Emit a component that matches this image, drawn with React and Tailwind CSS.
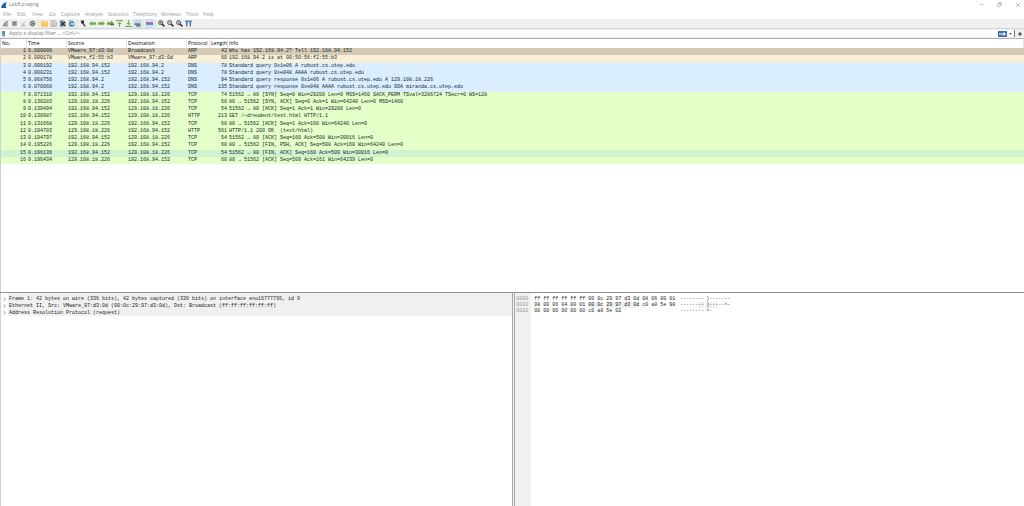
import React from "react";
import { Copy, Minus, X } from "lucide-react";

const MENU = [
  { label: "File", width: "w-[14px]" },
  { label: "Edit", width: "w-[15px]" },
  { label: "View", width: "w-[17px]" },
  { label: "Go", width: "w-[12px]" },
  { label: "Capture", width: "w-[24px]" },
  { label: "Analyze", width: "w-[23px]" },
  { label: "Statistics", width: "w-[25px]" },
  { label: "Telephony", width: "w-[28px]" },
  { label: "Wireless", width: "w-[25px]" },
  { label: "Tools", width: "w-[17px]" },
  { label: "Help", width: "w-[16px]" },
];

const PACKETS = [
  ["0.000000", "VMware_97:d3:0d", "Broadcast", "ARP", 42, "Who has 192.168.94.2? Tell 192.168.94.152", "bg-[#d4cab5]"],
  ["0.000178", "VMware_f2:55:b3", "VMware_97:d3:0d", "ARP", 60, "192.168.94.2 is at 00:50:56:f2:55:b3", "bg-[#faf0d7]"],
  ["0.000192", "192.168.94.152", "192.168.94.2", "DNS", 78, "Standard query 0x1e06 A robust.cs.utep.edu", "bg-[#daeeff]"],
  ["0.000231", "192.168.94.152", "192.168.94.2", "DNS", 78, "Standard query 0xe048 AAAA robust.cs.utep.edu", "bg-[#daeeff]"],
  ["0.068756", "192.168.94.2", "192.168.94.152", "DNS", 94, "Standard query response 0x1e06 A robust.cs.utep.edu A 129.108.18.226", "bg-[#daeeff]"],
  ["0.070960", "192.168.94.2", "192.168.94.152", "DNS", 135, "Standard query response 0xe048 AAAA robust.cs.utep.edu SOA miranda.cs.utep.edu", "bg-[#daeeff]"],
  ["0.071310", "192.168.94.152", "129.108.18.226", "TCP", 74, "51562 → 80 [SYN] Seq=0 Win=29200 Len=0 MSS=1460 SACK_PERM TSval=3286724 TSecr=0 WS=128", "bg-[#e4ffc7]"],
  ["0.130283", "129.108.18.226", "192.168.94.152", "TCP", 60, "80 → 51562 [SYN, ACK] Seq=0 Ack=1 Win=64240 Len=0 MSS=1460", "bg-[#e4ffc7]"],
  ["0.130494", "192.168.94.152", "129.108.18.226", "TCP", 54, "51562 → 80 [ACK] Seq=1 Ack=1 Win=29200 Len=0", "bg-[#e4ffc7]"],
  ["0.130987", "192.168.94.152", "129.108.18.226", "HTTP", 213, "GET /~dreudent/test.html HTTP/1.1", "bg-[#e4ffc7]"],
  ["0.131668", "129.108.18.226", "192.168.94.152", "TCP", 60, "80 → 51562 [ACK] Seq=1 Ack=160 Win=64240 Len=0", "bg-[#e4ffc7]"],
  ["0.194703", "129.108.18.226", "192.168.94.152", "HTTP", 561, "HTTP/1.1 200 OK  (text/html)", "bg-[#e4ffc7]"],
  ["0.194797", "192.168.94.152", "129.108.18.226", "TCP", 54, "51562 → 80 [ACK] Seq=160 Ack=508 Win=30016 Len=0", "bg-[#e4ffc7]"],
  ["0.195226", "129.108.18.226", "192.168.94.152", "TCP", 60, "80 → 51562 [FIN, PSH, ACK] Seq=508 Ack=160 Win=64240 Len=0", "bg-[#e4ffc7]"],
  ["0.196136", "192.168.94.152", "129.108.18.226", "TCP", 54, "51562 → 80 [FIN, ACK] Seq=160 Ack=509 Win=30016 Len=0", "bg-[#cff3cf]"],
  ["0.196434", "129.108.18.226", "192.168.94.152", "TCP", 60, "80 → 51562 [ACK] Seq=509 Ack=161 Win=64239 Len=0", "bg-[#e4ffc7]"],
];

const DETAILS = [
  "Frame 1: 42 bytes on wire (336 bits), 42 bytes captured (336 bits) on interface eno16777736, id 0",
  "Ethernet II, Src: VMware_97:d3:0d (00:0c:29:97:d3:0d), Dst: Broadcast (ff:ff:ff:ff:ff:ff)",
  "Address Resolution Protocol (request)",
];

// array values are split into plain and highlighted runs
const BYTES = [
  { offset: "0000", left: "ff ff ff ff ff ff 00 0c", right: "29 97 d3 0d 08 06 00 01", a: "········", b: ")·······" },
  { offset: "0010", left: ["08 00 06 04 00 01 ", "00 0c"], right: ["29 97 d3 0d", " c0 a8 5e 98"], a: ["······", "··"], b: [")···", "··^·"] },
  { offset: "0020", left: "00 00 00 00 00 00 c0 a8", right: "5e 02", a: "········", b: "^·" },
];

function Fin({ className, fill }) {
  return (
    <svg viewBox="0 0 12 12" className={className} aria-hidden="true">
      <path d="M0 12C1 6 5 1 12 0C9 4 9 8 11 12Z" fill={fill} />
    </svg>
  );
}

function Eraser() {
  return (
    <>
      <path d="M2 11C3 6 5 3 10 2C8 5 8 8 9 11Z" fill="#b9b9b9" />
      <path d="M4 9L8 5M8 5V8M8 5H5" stroke="#fff" fill="none" />
    </>
  );
}

function Gear() {
  return (
    <>
      <circle cx="6" cy="6" r="5.5" fill="#c9c9c9" />
      <circle cx="6" cy="6" r="3.5" stroke="#444" strokeWidth="1.5" fill="#eee" />
      <circle cx="6" cy="6" r="1.5" fill="#333" />
    </>
  );
}

function Page({ tint, children }) {
  return (
    <>
      <path d="M2 1H8L11 4V11H2Z" fill={tint} stroke="#888" />
      {children}
    </>
  );
}

function Zoom({ children }) {
  return (
    <>
      <circle cx="4.5" cy="4.5" r="3.5" fill="#e4e4e4" stroke="#444" strokeWidth="1.5" />
      <path d="M7 7L11 11" stroke="#222" strokeWidth="2.5" />
      {children}
    </>
  );
}

const TOOLS = [
  { name: "Start", art: <path d="M1 11C2 6 5 2 11 1C9 5 9 8 10 11Z" fill="#9a9a9a" /> },
  { name: "Stop", art: <path d="M2 2H10V10H2Z" fill="#8f8f8f" /> },
  { name: "Restart", art: <Eraser /> },
  { name: "Options", art: <Gear /> },
  { name: "Open", gap: true, art: <path d="M0 2H5L6 3H12V11H0Z" fill="#f8cb5c" stroke="#e3a92f" strokeWidth=".5" /> },
  { name: "Save", art: <Page tint="#e6e6e6"><path d="M4 5H9M4 7H9M4 9H9" stroke="#999" /></Page> },
  { name: "Close", art: <Page tint="#8fb4c9"><path d="M3 3L10 10M10 3L3 10" stroke="#17303c" strokeWidth="2" /></Page> },
  { name: "Reload", art: <Page tint="#c9e2f3"><path d="M9 5A3 3 0 1 0 9 8" stroke="#1476ac" strokeWidth="2" fill="none" /></Page> },
  { name: "Find", gap: true, art: <><path d="M1 1H7V6L3 7Z" fill="#333" /><path d="M5 6L9 11" stroke="#222" strokeWidth="2" /></> },
  { name: "Back", art: <path d="M0 6L5 2V4H12V8H5V10Z" fill="#72b149" /> },
  { name: "Forward", art: <path d="M12 6L7 2V4H0V8H7V10Z" fill="#72b149" /> },
  { name: "Go to", art: <><path d="M0 4H7V1L12 6L7 10V8H0Z" fill="#62a53b" /><path d="M6 7H12V9H6Z" fill="#405c32" /></> },
  { name: "First", art: <><path d="M0 1H12" stroke="#72b149" strokeWidth="2" /><path d="M6 3L10 7H7V12H5V7H2Z" fill="#72b149" /></> },
  { name: "Last", art: <><path d="M0 11H12" stroke="#72b149" strokeWidth="2" /><path d="M6 9L10 5H7V0H5V5H2Z" fill="#72b149" /></> },
  { name: "Auto scroll", on: true, art: <><path d="M1 1H11V6H1Z" fill="#c8d3da" /><path d="M1 7H11M4 10H11" stroke="#555" strokeWidth="2" /></> },
  { name: "Colorize", on: true, gap: true, art: <><path d="M0 3H12V9H0Z" fill="#d9d4e8" /><path d="M0 5H12" stroke="#c2425c" strokeWidth="2" /><path d="M0 7H12" stroke="#3f6cb4" strokeWidth="2" /></> },
  { name: "Zoom in", gap: true, art: <Zoom><path d="M3 4.5H6M4.5 3V6" stroke="#222" /></Zoom> },
  { name: "Zoom out", art: <Zoom><path d="M3 4.5H6" stroke="#222" /></Zoom> },
  { name: "Normal size", art: <Zoom><path d="M3 4H6M3 6H6" stroke="#444" /></Zoom> },
  { name: "Resize columns", art: <><path d="M0 1H12V3H0Z" fill="#3976a8" /><path d="M1 3H5L3 8ZM7 3H11L9 8Z" fill="#3976a8" /><path d="M3 5V11M9 5V11" stroke="#3f5f7c" strokeWidth="2" /></> },
];

function TitleBar() {
  return (
    <header className="flex h-[9px] items-center pl-px">
      <Fin className="size-[6px]" fill="#1264b5" />
      <h1 className="flex-1 pl-[2px] text-[5px] text-[#777]">Lab8.pcapng</h1>
      <div className="flex gap-[13px] pr-[3px] text-[#777]">
        <button aria-label="Minimize"><Minus className="size-[5px]" /></button>
        <button aria-label="Restore"><Copy className="size-[5px] -scale-x-100" /></button>
        <button aria-label="Close"><X className="size-[6px]" /></button>
      </div>
    </header>
  );
}

function MenuBar() {
  return (
    <nav className="flex h-[10px] items-center pl-[3px] text-[5px] text-[#999]">
      {MENU.map((item) => (
        <button key={item.label} className={`text-left ${item.width}`}>{item.label}</button>
      ))}
    </nav>
  );
}

function Toolbar() {
  return (
    <div className="flex h-[9px] items-center bg-[#f0f0f0] pl-px">
      {TOOLS.map((tool) => (
        <React.Fragment key={tool.name}>
          {tool.gap && <span className="mx-px h-[7px] w-px bg-[#ddd]" />}
          <button
            aria-label={tool.name}
            className={`flex h-[9px] w-[9px] items-center justify-center ${tool.on ? "bg-[#cce4f7]" : ""}`}
          >
            <svg viewBox="0 0 12 12" className="size-[7px]" aria-hidden="true">{tool.art}</svg>
          </button>
        </React.Fragment>
      ))}
    </div>
  );
}

function FilterBar() {
  return (
    <div className="flex h-[11px] items-center border-t border-b border-t-[#d5d5d5] border-b-[#b0b0b8] bg-[#f0f0f0]">
      <div className="ml-px flex h-[7px] flex-1 items-center bg-white pl-px">
        <svg viewBox="0 0 6 12" className="h-[6px] w-[3px]" aria-hidden="true">
          <path d="M0 0H6V12L3 9L0 12Z" fill="#648fbe" />
        </svg>
        <input
          aria-label="Display filter"
          placeholder="Apply a display filter … <Ctrl-/>"
          className="h-[7px] flex-1 pl-[4px] text-[5px] outline-none placeholder:text-[#777]"
        />
        <button aria-label="Apply" className="flex h-[6px] w-[9px] items-center justify-center bg-[#3f72ad]">
          <svg viewBox="0 0 14 8" className="h-[4px] w-[7px]" aria-hidden="true">
            <path d="M0 3H9V0L14 4L9 8V5H0Z" fill="#fff" />
          </svg>
        </button>
        <button aria-label="Recent filters" className="flex h-[7px] w-[8px] items-center justify-center border-r border-[#777]">
          <svg viewBox="0 0 8 6" className="h-[2px] w-[3px]" aria-hidden="true"><path d="M0 0H8L4 6Z" fill="#555" /></svg>
        </button>
      </div>
      <button aria-label="Add filter" className="flex w-[9px] justify-center">
        <svg viewBox="0 0 8 8" className="size-[4px]" aria-hidden="true"><path d="M4 0V8M0 4H8" stroke="#333" strokeWidth="2" /></svg>
      </button>
    </div>
  );
}

function PacketList() {
  return (
    <section className="h-[253px] shrink-0 overflow-hidden border-l border-[#d0d0d0]">
      <table className="h-[125px] w-full table-fixed border-separate border-spacing-0 text-[5px] leading-[7px] whitespace-pre">
        <thead>
          <tr className="h-[9px] text-left *:border-r *:border-[#e5e5e5] *:p-0 *:pl-px *:font-normal">
            <th className="w-[26px]">No.</th>
            <th className="w-[40px]">Time</th>
            <th className="w-[60px]">Source</th>
            <th className="w-[60px]">Destination</th>
            <th className="w-[23px]">Protocol</th>
            <th className="w-[18px]">Length</th>
            <th>Info</th>
          </tr>
        </thead>
        <tbody className="font-['Liberation_Mono',monospace] text-[#12272e]">
          {PACKETS.map(([time, source, destination, protocol, length, info, color], i) => (
            <tr key={time} className={`*:p-0 *:pl-px ${color}`}>
              <td className="text-right"><span className="pr-px">{i + 1}</span></td>
              <td>{time}</td>
              <td>{source}</td>
              <td>{destination}</td>
              <td>{protocol}</td>
              <td className="text-right"><span className="pr-px">{length}</span></td>
              <td>{info}</td>
            </tr>
          ))}
        </tbody>
      </table>
    </section>
  );
}

function PacketDetails() {
  return (
    <section className="overflow-hidden border-l border-[#d0d0d0] font-['Liberation_Mono',monospace] text-[5px] leading-[7px] text-[#222]">
      <div className="ml-[7px] h-[2px] bg-[#f0f0f0]" />
      {DETAILS.map((line) => (
        <div key={line} className="flex items-center">
          <button aria-label="Expand" className="flex w-[7px] justify-center">
            <svg viewBox="0 0 6 8" className="h-[4px] w-[3px]" aria-hidden="true">
              <path d="M1 0L5 4L1 8" fill="none" stroke="#888" strokeWidth="1.5" />
            </svg>
          </button>
          <span className="flex-1 whitespace-pre bg-[#f0f0f0] pt-px pl-px leading-[6px]">{line}</span>
        </div>
      ))}
    </section>
  );
}

function Marked({ value, mark }) {
  if (typeof value === "string") return value;
  return value.map((part, i) => (
    <span key={part} className={i === mark ? "bg-[#f0f0f0]" : ""}>{part}</span>
  ));
}

function PacketBytes() {
  return (
    <section className="flex overflow-hidden border-l border-[#aaa] font-['Liberation_Mono',monospace] text-[5px] leading-[6px] whitespace-pre">
      <div className="w-[16px] bg-[#f0f0f0] pt-[3px] pl-px text-[#999]">
        {BYTES.map((row) => <div key={row.offset}>{row.offset}</div>)}
      </div>
      <div className="pt-[3px] pl-[3px] text-[#222]">
        {BYTES.map((row) => (
          <div key={row.offset} className="flex">
            <span className="w-[72px]"><Marked value={row.left} mark={1} /></span>
            <span className="w-[74px]"><Marked value={row.right} mark={0} /></span>
            <span className="w-[26px]"><Marked value={row.a} mark={1} /></span>
            <span><Marked value={row.b} mark={0} /></span>
          </div>
        ))}
      </div>
    </section>
  );
}

export default function App() {
  return (
    <div className="flex min-h-screen flex-col overflow-hidden bg-white font-['Open_Sans',sans-serif] leading-[7px] text-black">
      <TitleBar />
      <MenuBar />
      <Toolbar />
      <FilterBar />
      <PacketList />
      <main className="grid flex-1 grid-cols-[201fr_2px_200fr] border-t border-[#8c9499]">
        <PacketDetails />
        <div className="border-l border-[#aaa] bg-[#f0f0f0]" />
        <PacketBytes />
      </main>
    </div>
  );
}
